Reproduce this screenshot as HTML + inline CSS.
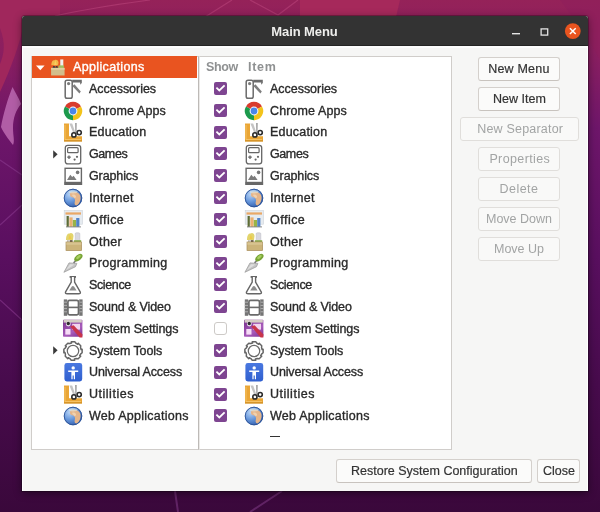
<!DOCTYPE html>
<html><head><meta charset="utf-8"><style>
*{margin:0;padding:0;box-sizing:border-box}
html,body{width:600px;height:512px;overflow:hidden}
body{position:relative;font-family:"Liberation Sans",sans-serif;
background:#5e1164;}
.wall{position:absolute;left:0;top:0;width:600px;height:512px}
.win{position:absolute;left:22px;top:16px;width:566px;height:475px;background:linear-gradient(#333 0,#333 29px,#f6f6f5 29px);border-radius:3px 3px 0 0;
box-shadow:inset 1px 0 0 #fff,inset -1px 0 0 #fff,0 2px 8px rgba(0,0,0,0.45),0 0 0 1px rgba(0,0,0,0.25)}
.title{position:absolute;left:22px;top:16px;width:566px;height:30px;background:#333333;border-radius:3px 3px 0 0;border-bottom:1px solid #242424}
.ttext{will-change:transform;position:absolute;left:0;top:16px;width:609px;height:30px;line-height:32px;text-align:center;color:#eeeeec;font-weight:bold;font-size:13px;letter-spacing:-0.1px}
.panel{position:absolute;background:#fff;border:1px solid #d0cdca}
.sel{position:absolute;left:32px;width:165px;background:#e95420}
.t{will-change:transform;position:absolute;height:21.82px;line-height:23.6px;font-size:12.5px;color:#2a2a2a;white-space:nowrap;-webkit-text-stroke-width:0.35px}
.t.w{color:#fff}
.ic{position:absolute;overflow:visible}
.cb{position:absolute;width:13px;height:13px;background:#7e4591;border-radius:2px}
.cb svg{position:absolute;left:0;top:0}
.cb.un{background:#fff;border:1px solid #cdcac7;border-radius:3px;margin-top:-0.5px;height:13.5px}
.hdr{will-change:transform;position:absolute;top:56px;height:22px;line-height:22px;font-size:12.5px;font-weight:bold;color:#8f9192}
.btn{position:absolute;height:24px;line-height:22px;text-align:center;font-size:12.5px;color:#333;-webkit-text-stroke-width:0.2px;background:#fbfbfa;
border:1px solid #d4d0cc;border-bottom-color:#c8c3be;border-radius:3px}
.bt{display:inline-block;will-change:transform}
.btn.dis{color:#a2a4a4;background:#f9f9f8;border-color:#e0dedb;-webkit-text-stroke-width:0}
</style></head><body>
<svg class="wall" width="600" height="512" viewBox="0 0 600 512">
<defs><linearGradient id="wbg" x1="0" y1="0" x2="0" y2="1">
<stop offset="0" stop-color="#952259"/><stop offset="0.1" stop-color="#8b1f60"/><stop offset="0.25" stop-color="#6e166a"/>
<stop offset="0.5" stop-color="#590f5f"/><stop offset="0.75" stop-color="#470b4c"/><stop offset="1" stop-color="#3a083b"/></linearGradient></defs>
<rect width="600" height="512" fill="url(#wbg)"/>
<path d="M0 0 H60 V17 L23 28 C19 45 12 66 0 92 V64 C4 54 6 44 0 28 Z" fill="#a0275c"/>
<path d="M23 50 C20 60 18 80 22 96 V50 Z" fill="#7c1a6c" opacity="0.5"/>
<path d="M300 0 H400 L396 17 H300 Z" fill="#a6295b"/>
<path d="M560 0 H600 V60 C590 40 575 20 560 0 Z" fill="#8e1e5c" opacity="0.5"/>
<path d="M205 17 L232 0 M250 0 L278 15 L298 0 M55 16 C90 8 120 4 150 0" stroke="#c04a80" stroke-width="1.2" fill="none" opacity="0.5"/>
<path d="M12.5 87 C15 92 19 98 21 104 C16 110 13 118 13 128 C13 136 15 141 13 145 C9 140 3 132 1 127 C3 115 8 98 12.5 87 Z" fill="#b865ad" opacity="0.9"/>
<path d="M0 160 L22 175 M0 225 L22 205 M0 300 L22 320" stroke="#8a3a90" stroke-width="1.2" fill="none" opacity="0.6"/>
<path d="M175 491 L178 512 M250 512 L282 491" stroke="#6a2a6e" stroke-width="2" fill="none" opacity="0.8"/>
</svg>
<div class="win"></div>
<div class="title"></div>
<div style="position:absolute;left:22px;top:46px;width:566px;height:2px;background:#fdfdfd"></div>
<div class="ttext">Main Menu</div>
<svg class="ic" style="left:512px;top:32.6px" width="8" height="2"><rect width="8" height="1.4" fill="#e4e4e4"/></svg>
<svg class="ic" style="left:540px;top:28px" width="9" height="8"><rect x="1.1" y="0.9" width="6.6" height="6.2" fill="none" stroke="#e4e4e4" stroke-width="1.3"/></svg>
<svg class="ic" style="left:564px;top:23px" width="18" height="18" viewBox="0 0 18 18"><circle cx="8.8" cy="8.1" r="7.9" fill="#e9541f"/><path d="M5.9 5.2 L11.7 11 M11.7 5.2 L5.9 11" stroke="#fff" stroke-width="1.5"/></svg>
<div class="panel" style="left:31px;top:56px;width:168px;height:394px;border-right-color:#bdbab7"></div>
<div class="panel" style="left:199px;top:56px;width:253px;height:394px;border-left-color:#ebe9e7"></div>
<div class="hdr" style="left:205.5px;letter-spacing:-0.35px">Show</div>
<div class="hdr" style="left:247.6px;letter-spacing:0.7px">Item</div>
<div style="position:absolute;left:270px;top:436px;width:10px;height:1px;background:#333"></div>
<div class="sel" style="top:56.00px;height:21.82px"></div>
<svg class="ic" style="left:36px;top:65px" width="9" height="6" viewBox="0 0 9 6"><path d="M0 0.5 H8.6 L4.3 5.2 Z" fill="#fff"/></svg>
<svg class="ic" style="left:50.00px;top:57.50px" width="18" height="18" viewBox="0 0 20 20"><path d="M1.5 7.5 C1.5 4 3 2 5 2.5 C7 1 9.5 3 9.5 5 L9 8 H1.5 Z" fill="#f2b84a"/><path d="M4.5 8 L6 2.5 L7.6 8 Z" fill="#f8d060"/><rect x="11.4" y="1.6" width="3.4" height="8" fill="#f0f0ee"/><rect x="9.4" y="8.2" width="6" height="3" fill="#9cc060"/><circle cx="4.4" cy="10.2" r="1.3" fill="#3a3a3a"/><circle cx="7.4" cy="10.2" r="1.3" fill="#3a3a3a"/><rect x="1.2" y="11" width="15" height="8.4" fill="#d2be8c"/><rect x="1.2" y="11" width="15" height="2" fill="#e0d0a0"/></svg>
<div class="t w" style="left:73.4px;top:56.00px;letter-spacing:0.35px">Applications</div>
<svg class="ic" style="left:63.40px;top:78.72px" width="20" height="20" viewBox="0 0 20 20"><rect x="2.2" y="1.3" width="7" height="18" rx="1.8" fill="#fff" stroke="#6b6b6b" stroke-width="1.5"/><circle cx="5.6" cy="4.6" r="1.6" fill="#7a7a7a"/><path d="M9.2 0.7 H18.8 V4 L17.2 5.8 V3.6 H9.2 Z" fill="#6b6b6b"/><path d="M9.4 7 L11.4 5.2 L17.8 12.4 L16.4 14.6 Z" fill="#7e7e7e"/></svg>
<div class="t" style="left:89px;top:77.82px;letter-spacing:-0.030px;">Accessories</div>
<svg class="ic" style="left:63.40px;top:100.54px" width="20" height="20" viewBox="0 0 20 20"><path d="M10 10 L17.97 5.4 A9.2 9.2 0 0 0 2.03 5.4 Z" fill="#d93c2e"/><path d="M10 10 L10 19.2 A9.2 9.2 0 0 0 17.97 5.4 Z" fill="#f3c31a"/><path d="M10 10 L2.03 5.4 A9.2 9.2 0 0 0 10 19.2 Z" fill="#1c9a4c"/><circle cx="10" cy="10" r="4.4" fill="#fff"/><circle cx="10" cy="10" r="3.4" fill="#4a86e8"/></svg>
<div class="t" style="left:89px;top:99.64px;letter-spacing:0.110px;">Chrome Apps</div>
<svg class="ic" style="left:63.40px;top:122.36px" width="20" height="20" viewBox="0 0 20 20"><path d="M1 1.6 H6 V14.3 H19 V19.4 H1 Z" fill="#eaa636"/><path d="M1 18.4 H19 V19.4 H1 Z" fill="#c98a22"/><path d="M2 3 V17.5 M2 17.5 H18" stroke="#f6c870" stroke-width="0.8"/><path d="M6.4 1.6 H9.2 L12.6 11.6 L11 12.4 Z" fill="#c4c4c4"/><path d="M12 0.9 H13.8 L13.6 10.6 L12.2 10.8 Z" fill="#a8a8a8"/><circle cx="10.9" cy="12.9" r="2.1" fill="none" stroke="#2a2a2a" stroke-width="1.6"/><circle cx="16.2" cy="10.6" r="2.1" fill="none" stroke="#2a2a2a" stroke-width="1.6"/></svg>
<div class="t" style="left:89px;top:121.46px;letter-spacing:0.200px;">Education</div>
<svg class="ic" style="left:53px;top:149.68px" width="5" height="9" viewBox="0 0 5 9"><path d="M0.2 0.3 V8.4 L4.6 4.35 Z" fill="#3a3a3a"/></svg>
<svg class="ic" style="left:63.40px;top:144.18px" width="20" height="20" viewBox="0 0 20 20"><rect x="2.3" y="1.3" width="15.4" height="18.6" rx="2.4" fill="#fff" stroke="#656565" stroke-width="1.3"/><rect x="4.6" y="3.7" width="10.5" height="5" rx="1" fill="none" stroke="#656565" stroke-width="1.2"/><path d="M4.2 13.2 H7.8 M6 11.4 V15" stroke="#656565" stroke-width="1.3"/><circle cx="14" cy="12.8" r="1.1" fill="#656565"/><circle cx="11.6" cy="15.6" r="1.1" fill="#656565"/></svg>
<div class="t" style="left:89px;top:143.28px;letter-spacing:-0.400px;">Games</div>
<svg class="ic" style="left:63.40px;top:166.00px" width="20" height="20" viewBox="0 0 20 20"><rect x="2.1" y="2.3" width="16.3" height="16" fill="#fff" stroke="#686868" stroke-width="1.4"/><rect x="1.4" y="15.8" width="17.7" height="3.1" fill="#686868"/><path d="M4 14 L7.3 8.8 L9.2 11 L10.6 9.8 L13.6 14 Z" fill="#7c7c7c"/><circle cx="14.6" cy="6.4" r="1.8" fill="#777"/></svg>
<div class="t" style="left:89px;top:165.10px;letter-spacing:-0.114px;">Graphics</div>
<svg class="ic" style="left:63.40px;top:187.82px" width="20" height="20" viewBox="0 0 20 20"><defs><radialGradient id="g7" cx="0.32" cy="0.3" r="0.78"><stop offset="0" stop-color="#b8d4f6"/><stop offset="0.5" stop-color="#6898dc"/><stop offset="1" stop-color="#2f5aa8"/></radialGradient></defs><circle cx="10" cy="10" r="9.2" fill="url(#g7)"/><path d="M7.6 4.6 C11 2.8 15.6 3.8 17.2 7.4 C18.2 11 17 15 14.2 17.2 C12.6 18 11.4 16.6 11.6 15 C11.8 13.2 12.6 11.6 11.2 10.2 C10.2 9.2 8.6 9.6 7.6 8.6 C6.6 7.6 6.6 5.6 7.6 4.6 Z" fill="#e6b68a"/><path d="M9 7 C10 6.2 12 6.6 12.8 7.8 C13.4 9 12.6 10.4 11.6 10 C10.8 9.4 9.6 8.6 9 7 Z" fill="#f0d2b0"/><ellipse cx="10" cy="3.8" rx="4.6" ry="1.6" fill="#e6efe8" opacity="0.55"/><circle cx="10" cy="10" r="8.8" fill="none" stroke="#2c5296" stroke-width="0.9"/></svg>
<div class="t" style="left:89px;top:186.92px;letter-spacing:0.300px;">Internet</div>
<svg class="ic" style="left:63.40px;top:209.64px" width="20" height="20" viewBox="0 0 20 20"><rect x="1.2" y="0.6" width="18.3" height="13.6" fill="#e6ebf0" stroke="#cdd3d9" stroke-width="0.6"/><rect x="2.5" y="2.4" width="15.5" height="2.2" fill="#eaa866"/><rect x="3.6" y="6" width="2.2" height="11" fill="#5e6c34"/><rect x="6.4" y="7.4" width="3.2" height="9.6" fill="#ecb070"/><rect x="9.8" y="10" width="3.2" height="7" fill="#98b448"/><rect x="13.2" y="8" width="3.2" height="9" fill="#5282c6"/><rect x="3" y="16.4" width="15" height="1" fill="#8a8a8a"/></svg>
<div class="t" style="left:89px;top:208.74px;letter-spacing:0.480px;">Office</div>
<svg class="ic" style="left:63.40px;top:231.46px" width="20" height="20" viewBox="0 0 20 20"><path d="M3 8 C3 4 5 2 6.5 2.5 C8 1 10.5 2.5 10.5 5 L10 9 H3 Z" fill="#e2d46c"/><path d="M5.5 8 L6.8 3.5 L8.5 8 Z" fill="#f0c84a"/><rect x="12.2" y="1.8" width="4.6" height="8" rx="1" fill="#d8d8e0" stroke="#b8b8c0" stroke-width="0.5"/><rect x="10.8" y="9.2" width="7.4" height="3" fill="#8aac4c"/><rect x="4.6" y="9.2" width="5" height="3" fill="#5a4a3a"/><circle cx="6" cy="10" r="1" fill="#f0f0f0"/><rect x="3" y="11" width="15.6" height="8.6" fill="#ccb47a" stroke="#a88f5c" stroke-width="0.7"/><rect x="3.4" y="11.4" width="14.8" height="2.4" fill="#d8c490"/></svg>
<div class="t" style="left:89px;top:230.56px;letter-spacing:0.350px;">Other</div>
<svg class="ic" style="left:63.40px;top:253.28px" width="20" height="20" viewBox="0 0 20 20"><path d="M0.9 19.3 L6 9.9 L13.9 10.4 L12.5 13.7 Z" fill="#c4c4c4" stroke="#9a9a9a" stroke-width="0.7" stroke-linejoin="round"/><path d="M3 17 L7 11.2 L11.5 11.6 Z" fill="#dedede"/><path d="M10.6 10 L12.8 7.4" stroke="#7a7a7a" stroke-width="1.6"/><ellipse cx="15.4" cy="4.6" rx="4.8" ry="2.8" transform="rotate(-40 15.4 4.6)" fill="#78a436"/><ellipse cx="15.8" cy="4.2" rx="2.8" ry="1.2" transform="rotate(-40 15.4 4.6)" fill="#a8d060"/></svg>
<div class="t" style="left:89px;top:252.38px;letter-spacing:0.330px;">Programming</div>
<svg class="ic" style="left:63.40px;top:275.10px" width="20" height="20" viewBox="0 0 20 20"><path d="M6.6 1.9 H13" stroke="#666" stroke-width="1.8"/><path d="M8.2 2 V7.2 L2.6 16.8 Q1.8 18.8 4.2 18.8 H15.6 Q18 18.8 17.2 16.8 L11.6 7.2 V2" fill="#fff" stroke="#666" stroke-width="1.4" stroke-linejoin="round"/><path d="M6.2 15.6 L8.8 11.4 Q9.9 10.6 11 11.4 L13.6 15.6 Z" fill="#8c8c8c"/></svg>
<div class="t" style="left:89px;top:274.20px;letter-spacing:-0.367px;">Science</div>
<svg class="ic" style="left:63.40px;top:296.92px" width="20" height="20" viewBox="0 0 20 20"><rect x="0.8" y="2.4" width="3.4" height="16.4" fill="#757575"/><rect x="16.2" y="2.4" width="3.4" height="16.4" fill="#757575"/><path d="M0.8 5.2 H4.2 M0.8 8.4 H4.2 M0.8 11.6 H4.2 M0.8 14.8 H4.2 M16.2 5.2 H19.6 M16.2 8.4 H19.6 M16.2 11.6 H19.6 M16.2 14.8 H19.6" stroke="#b8b8b8" stroke-width="0.9"/><rect x="4.9" y="3.3" width="10.6" height="14.6" rx="1.6" fill="#fff" stroke="#6a6a6a" stroke-width="1.7"/><path d="M4.9 10.4 H15.5" stroke="#6a6a6a" stroke-width="1.6"/></svg>
<div class="t" style="left:89px;top:296.02px;letter-spacing:-0.108px;">Sound &amp; Video</div>
<svg class="ic" style="left:63.40px;top:318.74px" width="20" height="20" viewBox="0 0 20 20"><defs><linearGradient id="g13" x1="0" y1="0" x2="0.7" y2="1"><stop offset="0" stop-color="#76308a"/><stop offset="0.7" stop-color="#a85cbc"/><stop offset="1" stop-color="#8a3e9c"/></linearGradient></defs><rect x="0" y="0.8" width="19.4" height="16.9" rx="0.8" fill="url(#g13)"/><rect x="0.6" y="0.8" width="18.2" height="2.8" fill="#d4cec4"/><rect x="9.2" y="4.8" width="7.8" height="5.8" fill="#f2d4ee"/><path d="M7.2 7.6 L10.6 6.2 L19.4 15.4 V18.4 L16.6 18.4 Z" fill="#c8344a"/><circle cx="5.3" cy="5" r="2.4" fill="#efe6ef"/><circle cx="5.3" cy="4.5" r="1.7" fill="#2e2e2e"/><rect x="2.3" y="10" width="5.2" height="5.6" fill="#f6dcf6"/></svg>
<div class="t" style="left:89px;top:317.84px;letter-spacing:-0.057px;">System Settings</div>
<svg class="ic" style="left:53px;top:346.06px" width="5" height="9" viewBox="0 0 5 9"><path d="M0.2 0.3 V8.4 L4.6 4.35 Z" fill="#3a3a3a"/></svg>
<svg class="ic" style="left:63.40px;top:340.56px" width="20" height="20" viewBox="0 0 20 20"><path d="M8.23 0.87 L11.77 0.87 L13.14 2.42 L14.70 3.28 L15.20 2.29 L17.71 4.80 L17.58 6.86 L18.08 8.58 L19.13 8.23 L19.13 11.77 L17.58 13.14 L16.72 14.70 L17.71 15.20 L15.20 17.71 L13.14 17.58 L11.42 18.08 L11.77 19.13 L8.23 19.13 L6.86 17.58 L5.30 16.72 L4.80 17.71 L2.29 15.20 L2.42 13.14 L1.92 11.42 L0.87 11.77 L0.87 8.23 L2.42 6.86 L3.28 5.30 L2.29 4.80 L4.80 2.29 L6.86 2.42 L8.58 1.92 Z" fill="#fff" stroke="#656565" stroke-width="1.5" stroke-linejoin="round"/><circle cx="10" cy="10" r="5.7" fill="none" stroke="#6a6a6a" stroke-width="1.25"/></svg>
<div class="t" style="left:89px;top:339.66px;letter-spacing:-0.073px;">System Tools</div>
<svg class="ic" style="left:63.40px;top:362.38px" width="20" height="20" viewBox="0 0 20 20"><defs><linearGradient id="g15" x1="0" y1="0" x2="0" y2="1"><stop offset="0" stop-color="#4a78e0"/><stop offset="1" stop-color="#2f5fcf"/></linearGradient></defs><rect x="1.4" y="1" width="17.8" height="18.4" rx="2.4" fill="url(#g15)"/><circle cx="10.2" cy="5.9" r="1.7" fill="#fff"/><path d="M5.2 8.4 H15.2 L15.2 10 H12 V17.2 H10.8 V13.4 H9.6 V17.2 H8.4 V10 H5.2 Z" fill="#fff"/></svg>
<div class="t" style="left:89px;top:361.48px;letter-spacing:-0.133px;">Universal Access</div>
<svg class="ic" style="left:63.40px;top:384.20px" width="20" height="20" viewBox="0 0 20 20"><path d="M1 1.6 H6 V14.3 H19 V19.4 H1 Z" fill="#eaa636"/><path d="M1 18.4 H19 V19.4 H1 Z" fill="#c98a22"/><path d="M2 3 V17.5 M2 17.5 H18" stroke="#f6c870" stroke-width="0.8"/><path d="M6.4 1.6 H9.2 L12.6 11.6 L11 12.4 Z" fill="#c4c4c4"/><path d="M12 0.9 H13.8 L13.6 10.6 L12.2 10.8 Z" fill="#a8a8a8"/><circle cx="10.9" cy="12.9" r="2.1" fill="none" stroke="#2a2a2a" stroke-width="1.6"/><circle cx="16.2" cy="10.6" r="2.1" fill="none" stroke="#2a2a2a" stroke-width="1.6"/></svg>
<div class="t" style="left:89px;top:383.30px;letter-spacing:0.512px;">Utilities</div>
<svg class="ic" style="left:63.40px;top:406.02px" width="20" height="20" viewBox="0 0 20 20"><defs><radialGradient id="g17" cx="0.32" cy="0.3" r="0.78"><stop offset="0" stop-color="#b8d4f6"/><stop offset="0.5" stop-color="#6898dc"/><stop offset="1" stop-color="#2f5aa8"/></radialGradient></defs><circle cx="10" cy="10" r="9.2" fill="url(#g17)"/><path d="M7.6 4.6 C11 2.8 15.6 3.8 17.2 7.4 C18.2 11 17 15 14.2 17.2 C12.6 18 11.4 16.6 11.6 15 C11.8 13.2 12.6 11.6 11.2 10.2 C10.2 9.2 8.6 9.6 7.6 8.6 C6.6 7.6 6.6 5.6 7.6 4.6 Z" fill="#e6b68a"/><path d="M9 7 C10 6.2 12 6.6 12.8 7.8 C13.4 9 12.6 10.4 11.6 10 C10.8 9.4 9.6 8.6 9 7 Z" fill="#f0d2b0"/><ellipse cx="10" cy="3.8" rx="4.6" ry="1.6" fill="#e6efe8" opacity="0.55"/><circle cx="10" cy="10" r="8.8" fill="none" stroke="#2c5296" stroke-width="0.9"/></svg>
<div class="t" style="left:89px;top:405.12px;letter-spacing:0.253px;">Web Applications</div>
<div class="cb" style="left:214px;top:82.02px"><svg width="13" height="13" viewBox="0 0 13 13"><path d="M2.4 5.7 L5.3 8.4 L10.6 3.3" fill="none" stroke="#fff" stroke-width="1.8"/></svg></div>
<svg class="ic" style="left:244.40px;top:78.72px" width="20" height="20" viewBox="0 0 20 20"><rect x="2.2" y="1.3" width="7" height="18" rx="1.8" fill="#fff" stroke="#6b6b6b" stroke-width="1.5"/><circle cx="5.6" cy="4.6" r="1.6" fill="#7a7a7a"/><path d="M9.2 0.7 H18.8 V4 L17.2 5.8 V3.6 H9.2 Z" fill="#6b6b6b"/><path d="M9.4 7 L11.4 5.2 L17.8 12.4 L16.4 14.6 Z" fill="#7e7e7e"/></svg>
<div class="t" style="left:270px;top:77.82px;letter-spacing:-0.030px;">Accessories</div>
<div class="cb" style="left:214px;top:103.84px"><svg width="13" height="13" viewBox="0 0 13 13"><path d="M2.4 5.7 L5.3 8.4 L10.6 3.3" fill="none" stroke="#fff" stroke-width="1.8"/></svg></div>
<svg class="ic" style="left:244.40px;top:100.54px" width="20" height="20" viewBox="0 0 20 20"><path d="M10 10 L17.97 5.4 A9.2 9.2 0 0 0 2.03 5.4 Z" fill="#d93c2e"/><path d="M10 10 L10 19.2 A9.2 9.2 0 0 0 17.97 5.4 Z" fill="#f3c31a"/><path d="M10 10 L2.03 5.4 A9.2 9.2 0 0 0 10 19.2 Z" fill="#1c9a4c"/><circle cx="10" cy="10" r="4.4" fill="#fff"/><circle cx="10" cy="10" r="3.4" fill="#4a86e8"/></svg>
<div class="t" style="left:270px;top:99.64px;letter-spacing:0.110px;">Chrome Apps</div>
<div class="cb" style="left:214px;top:125.66px"><svg width="13" height="13" viewBox="0 0 13 13"><path d="M2.4 5.7 L5.3 8.4 L10.6 3.3" fill="none" stroke="#fff" stroke-width="1.8"/></svg></div>
<svg class="ic" style="left:244.40px;top:122.36px" width="20" height="20" viewBox="0 0 20 20"><path d="M1 1.6 H6 V14.3 H19 V19.4 H1 Z" fill="#eaa636"/><path d="M1 18.4 H19 V19.4 H1 Z" fill="#c98a22"/><path d="M2 3 V17.5 M2 17.5 H18" stroke="#f6c870" stroke-width="0.8"/><path d="M6.4 1.6 H9.2 L12.6 11.6 L11 12.4 Z" fill="#c4c4c4"/><path d="M12 0.9 H13.8 L13.6 10.6 L12.2 10.8 Z" fill="#a8a8a8"/><circle cx="10.9" cy="12.9" r="2.1" fill="none" stroke="#2a2a2a" stroke-width="1.6"/><circle cx="16.2" cy="10.6" r="2.1" fill="none" stroke="#2a2a2a" stroke-width="1.6"/></svg>
<div class="t" style="left:270px;top:121.46px;letter-spacing:0.200px;">Education</div>
<div class="cb" style="left:214px;top:147.48px"><svg width="13" height="13" viewBox="0 0 13 13"><path d="M2.4 5.7 L5.3 8.4 L10.6 3.3" fill="none" stroke="#fff" stroke-width="1.8"/></svg></div>
<svg class="ic" style="left:244.40px;top:144.18px" width="20" height="20" viewBox="0 0 20 20"><rect x="2.3" y="1.3" width="15.4" height="18.6" rx="2.4" fill="#fff" stroke="#656565" stroke-width="1.3"/><rect x="4.6" y="3.7" width="10.5" height="5" rx="1" fill="none" stroke="#656565" stroke-width="1.2"/><path d="M4.2 13.2 H7.8 M6 11.4 V15" stroke="#656565" stroke-width="1.3"/><circle cx="14" cy="12.8" r="1.1" fill="#656565"/><circle cx="11.6" cy="15.6" r="1.1" fill="#656565"/></svg>
<div class="t" style="left:270px;top:143.28px;letter-spacing:-0.400px;">Games</div>
<div class="cb" style="left:214px;top:169.30px"><svg width="13" height="13" viewBox="0 0 13 13"><path d="M2.4 5.7 L5.3 8.4 L10.6 3.3" fill="none" stroke="#fff" stroke-width="1.8"/></svg></div>
<svg class="ic" style="left:244.40px;top:166.00px" width="20" height="20" viewBox="0 0 20 20"><rect x="2.1" y="2.3" width="16.3" height="16" fill="#fff" stroke="#686868" stroke-width="1.4"/><rect x="1.4" y="15.8" width="17.7" height="3.1" fill="#686868"/><path d="M4 14 L7.3 8.8 L9.2 11 L10.6 9.8 L13.6 14 Z" fill="#7c7c7c"/><circle cx="14.6" cy="6.4" r="1.8" fill="#777"/></svg>
<div class="t" style="left:270px;top:165.10px;letter-spacing:-0.114px;">Graphics</div>
<div class="cb" style="left:214px;top:191.12px"><svg width="13" height="13" viewBox="0 0 13 13"><path d="M2.4 5.7 L5.3 8.4 L10.6 3.3" fill="none" stroke="#fff" stroke-width="1.8"/></svg></div>
<svg class="ic" style="left:244.40px;top:187.82px" width="20" height="20" viewBox="0 0 20 20"><defs><radialGradient id="g23" cx="0.32" cy="0.3" r="0.78"><stop offset="0" stop-color="#b8d4f6"/><stop offset="0.5" stop-color="#6898dc"/><stop offset="1" stop-color="#2f5aa8"/></radialGradient></defs><circle cx="10" cy="10" r="9.2" fill="url(#g23)"/><path d="M7.6 4.6 C11 2.8 15.6 3.8 17.2 7.4 C18.2 11 17 15 14.2 17.2 C12.6 18 11.4 16.6 11.6 15 C11.8 13.2 12.6 11.6 11.2 10.2 C10.2 9.2 8.6 9.6 7.6 8.6 C6.6 7.6 6.6 5.6 7.6 4.6 Z" fill="#e6b68a"/><path d="M9 7 C10 6.2 12 6.6 12.8 7.8 C13.4 9 12.6 10.4 11.6 10 C10.8 9.4 9.6 8.6 9 7 Z" fill="#f0d2b0"/><ellipse cx="10" cy="3.8" rx="4.6" ry="1.6" fill="#e6efe8" opacity="0.55"/><circle cx="10" cy="10" r="8.8" fill="none" stroke="#2c5296" stroke-width="0.9"/></svg>
<div class="t" style="left:270px;top:186.92px;letter-spacing:0.300px;">Internet</div>
<div class="cb" style="left:214px;top:212.94px"><svg width="13" height="13" viewBox="0 0 13 13"><path d="M2.4 5.7 L5.3 8.4 L10.6 3.3" fill="none" stroke="#fff" stroke-width="1.8"/></svg></div>
<svg class="ic" style="left:244.40px;top:209.64px" width="20" height="20" viewBox="0 0 20 20"><rect x="1.2" y="0.6" width="18.3" height="13.6" fill="#e6ebf0" stroke="#cdd3d9" stroke-width="0.6"/><rect x="2.5" y="2.4" width="15.5" height="2.2" fill="#eaa866"/><rect x="3.6" y="6" width="2.2" height="11" fill="#5e6c34"/><rect x="6.4" y="7.4" width="3.2" height="9.6" fill="#ecb070"/><rect x="9.8" y="10" width="3.2" height="7" fill="#98b448"/><rect x="13.2" y="8" width="3.2" height="9" fill="#5282c6"/><rect x="3" y="16.4" width="15" height="1" fill="#8a8a8a"/></svg>
<div class="t" style="left:270px;top:208.74px;letter-spacing:0.480px;">Office</div>
<div class="cb" style="left:214px;top:234.76px"><svg width="13" height="13" viewBox="0 0 13 13"><path d="M2.4 5.7 L5.3 8.4 L10.6 3.3" fill="none" stroke="#fff" stroke-width="1.8"/></svg></div>
<svg class="ic" style="left:244.40px;top:231.46px" width="20" height="20" viewBox="0 0 20 20"><path d="M3 8 C3 4 5 2 6.5 2.5 C8 1 10.5 2.5 10.5 5 L10 9 H3 Z" fill="#e2d46c"/><path d="M5.5 8 L6.8 3.5 L8.5 8 Z" fill="#f0c84a"/><rect x="12.2" y="1.8" width="4.6" height="8" rx="1" fill="#d8d8e0" stroke="#b8b8c0" stroke-width="0.5"/><rect x="10.8" y="9.2" width="7.4" height="3" fill="#8aac4c"/><rect x="4.6" y="9.2" width="5" height="3" fill="#5a4a3a"/><circle cx="6" cy="10" r="1" fill="#f0f0f0"/><rect x="3" y="11" width="15.6" height="8.6" fill="#ccb47a" stroke="#a88f5c" stroke-width="0.7"/><rect x="3.4" y="11.4" width="14.8" height="2.4" fill="#d8c490"/></svg>
<div class="t" style="left:270px;top:230.56px;letter-spacing:0.350px;">Other</div>
<div class="cb" style="left:214px;top:256.58px"><svg width="13" height="13" viewBox="0 0 13 13"><path d="M2.4 5.7 L5.3 8.4 L10.6 3.3" fill="none" stroke="#fff" stroke-width="1.8"/></svg></div>
<svg class="ic" style="left:244.40px;top:253.28px" width="20" height="20" viewBox="0 0 20 20"><path d="M0.9 19.3 L6 9.9 L13.9 10.4 L12.5 13.7 Z" fill="#c4c4c4" stroke="#9a9a9a" stroke-width="0.7" stroke-linejoin="round"/><path d="M3 17 L7 11.2 L11.5 11.6 Z" fill="#dedede"/><path d="M10.6 10 L12.8 7.4" stroke="#7a7a7a" stroke-width="1.6"/><ellipse cx="15.4" cy="4.6" rx="4.8" ry="2.8" transform="rotate(-40 15.4 4.6)" fill="#78a436"/><ellipse cx="15.8" cy="4.2" rx="2.8" ry="1.2" transform="rotate(-40 15.4 4.6)" fill="#a8d060"/></svg>
<div class="t" style="left:270px;top:252.38px;letter-spacing:0.330px;">Programming</div>
<div class="cb" style="left:214px;top:278.40px"><svg width="13" height="13" viewBox="0 0 13 13"><path d="M2.4 5.7 L5.3 8.4 L10.6 3.3" fill="none" stroke="#fff" stroke-width="1.8"/></svg></div>
<svg class="ic" style="left:244.40px;top:275.10px" width="20" height="20" viewBox="0 0 20 20"><path d="M6.6 1.9 H13" stroke="#666" stroke-width="1.8"/><path d="M8.2 2 V7.2 L2.6 16.8 Q1.8 18.8 4.2 18.8 H15.6 Q18 18.8 17.2 16.8 L11.6 7.2 V2" fill="#fff" stroke="#666" stroke-width="1.4" stroke-linejoin="round"/><path d="M6.2 15.6 L8.8 11.4 Q9.9 10.6 11 11.4 L13.6 15.6 Z" fill="#8c8c8c"/></svg>
<div class="t" style="left:270px;top:274.20px;letter-spacing:-0.367px;">Science</div>
<div class="cb" style="left:214px;top:300.22px"><svg width="13" height="13" viewBox="0 0 13 13"><path d="M2.4 5.7 L5.3 8.4 L10.6 3.3" fill="none" stroke="#fff" stroke-width="1.8"/></svg></div>
<svg class="ic" style="left:244.40px;top:296.92px" width="20" height="20" viewBox="0 0 20 20"><rect x="0.8" y="2.4" width="3.4" height="16.4" fill="#757575"/><rect x="16.2" y="2.4" width="3.4" height="16.4" fill="#757575"/><path d="M0.8 5.2 H4.2 M0.8 8.4 H4.2 M0.8 11.6 H4.2 M0.8 14.8 H4.2 M16.2 5.2 H19.6 M16.2 8.4 H19.6 M16.2 11.6 H19.6 M16.2 14.8 H19.6" stroke="#b8b8b8" stroke-width="0.9"/><rect x="4.9" y="3.3" width="10.6" height="14.6" rx="1.6" fill="#fff" stroke="#6a6a6a" stroke-width="1.7"/><path d="M4.9 10.4 H15.5" stroke="#6a6a6a" stroke-width="1.6"/></svg>
<div class="t" style="left:270px;top:296.02px;letter-spacing:-0.108px;">Sound &amp; Video</div>
<div class="cb un" style="left:214px;top:322.04px"></div>
<svg class="ic" style="left:244.40px;top:318.74px" width="20" height="20" viewBox="0 0 20 20"><defs><linearGradient id="g29" x1="0" y1="0" x2="0.7" y2="1"><stop offset="0" stop-color="#76308a"/><stop offset="0.7" stop-color="#a85cbc"/><stop offset="1" stop-color="#8a3e9c"/></linearGradient></defs><rect x="0" y="0.8" width="19.4" height="16.9" rx="0.8" fill="url(#g29)"/><rect x="0.6" y="0.8" width="18.2" height="2.8" fill="#d4cec4"/><rect x="9.2" y="4.8" width="7.8" height="5.8" fill="#f2d4ee"/><path d="M7.2 7.6 L10.6 6.2 L19.4 15.4 V18.4 L16.6 18.4 Z" fill="#c8344a"/><circle cx="5.3" cy="5" r="2.4" fill="#efe6ef"/><circle cx="5.3" cy="4.5" r="1.7" fill="#2e2e2e"/><rect x="2.3" y="10" width="5.2" height="5.6" fill="#f6dcf6"/></svg>
<div class="t" style="left:270px;top:317.84px;letter-spacing:-0.057px;">System Settings</div>
<div class="cb" style="left:214px;top:343.86px"><svg width="13" height="13" viewBox="0 0 13 13"><path d="M2.4 5.7 L5.3 8.4 L10.6 3.3" fill="none" stroke="#fff" stroke-width="1.8"/></svg></div>
<svg class="ic" style="left:244.40px;top:340.56px" width="20" height="20" viewBox="0 0 20 20"><path d="M8.23 0.87 L11.77 0.87 L13.14 2.42 L14.70 3.28 L15.20 2.29 L17.71 4.80 L17.58 6.86 L18.08 8.58 L19.13 8.23 L19.13 11.77 L17.58 13.14 L16.72 14.70 L17.71 15.20 L15.20 17.71 L13.14 17.58 L11.42 18.08 L11.77 19.13 L8.23 19.13 L6.86 17.58 L5.30 16.72 L4.80 17.71 L2.29 15.20 L2.42 13.14 L1.92 11.42 L0.87 11.77 L0.87 8.23 L2.42 6.86 L3.28 5.30 L2.29 4.80 L4.80 2.29 L6.86 2.42 L8.58 1.92 Z" fill="#fff" stroke="#656565" stroke-width="1.5" stroke-linejoin="round"/><circle cx="10" cy="10" r="5.7" fill="none" stroke="#6a6a6a" stroke-width="1.25"/></svg>
<div class="t" style="left:270px;top:339.66px;letter-spacing:-0.073px;">System Tools</div>
<div class="cb" style="left:214px;top:365.68px"><svg width="13" height="13" viewBox="0 0 13 13"><path d="M2.4 5.7 L5.3 8.4 L10.6 3.3" fill="none" stroke="#fff" stroke-width="1.8"/></svg></div>
<svg class="ic" style="left:244.40px;top:362.38px" width="20" height="20" viewBox="0 0 20 20"><defs><linearGradient id="g31" x1="0" y1="0" x2="0" y2="1"><stop offset="0" stop-color="#4a78e0"/><stop offset="1" stop-color="#2f5fcf"/></linearGradient></defs><rect x="1.4" y="1" width="17.8" height="18.4" rx="2.4" fill="url(#g31)"/><circle cx="10.2" cy="5.9" r="1.7" fill="#fff"/><path d="M5.2 8.4 H15.2 L15.2 10 H12 V17.2 H10.8 V13.4 H9.6 V17.2 H8.4 V10 H5.2 Z" fill="#fff"/></svg>
<div class="t" style="left:270px;top:361.48px;letter-spacing:-0.133px;">Universal Access</div>
<div class="cb" style="left:214px;top:387.50px"><svg width="13" height="13" viewBox="0 0 13 13"><path d="M2.4 5.7 L5.3 8.4 L10.6 3.3" fill="none" stroke="#fff" stroke-width="1.8"/></svg></div>
<svg class="ic" style="left:244.40px;top:384.20px" width="20" height="20" viewBox="0 0 20 20"><path d="M1 1.6 H6 V14.3 H19 V19.4 H1 Z" fill="#eaa636"/><path d="M1 18.4 H19 V19.4 H1 Z" fill="#c98a22"/><path d="M2 3 V17.5 M2 17.5 H18" stroke="#f6c870" stroke-width="0.8"/><path d="M6.4 1.6 H9.2 L12.6 11.6 L11 12.4 Z" fill="#c4c4c4"/><path d="M12 0.9 H13.8 L13.6 10.6 L12.2 10.8 Z" fill="#a8a8a8"/><circle cx="10.9" cy="12.9" r="2.1" fill="none" stroke="#2a2a2a" stroke-width="1.6"/><circle cx="16.2" cy="10.6" r="2.1" fill="none" stroke="#2a2a2a" stroke-width="1.6"/></svg>
<div class="t" style="left:270px;top:383.30px;letter-spacing:0.512px;">Utilities</div>
<div class="cb" style="left:214px;top:409.32px"><svg width="13" height="13" viewBox="0 0 13 13"><path d="M2.4 5.7 L5.3 8.4 L10.6 3.3" fill="none" stroke="#fff" stroke-width="1.8"/></svg></div>
<svg class="ic" style="left:244.40px;top:406.02px" width="20" height="20" viewBox="0 0 20 20"><defs><radialGradient id="g33" cx="0.32" cy="0.3" r="0.78"><stop offset="0" stop-color="#b8d4f6"/><stop offset="0.5" stop-color="#6898dc"/><stop offset="1" stop-color="#2f5aa8"/></radialGradient></defs><circle cx="10" cy="10" r="9.2" fill="url(#g33)"/><path d="M7.6 4.6 C11 2.8 15.6 3.8 17.2 7.4 C18.2 11 17 15 14.2 17.2 C12.6 18 11.4 16.6 11.6 15 C11.8 13.2 12.6 11.6 11.2 10.2 C10.2 9.2 8.6 9.6 7.6 8.6 C6.6 7.6 6.6 5.6 7.6 4.6 Z" fill="#e6b68a"/><path d="M9 7 C10 6.2 12 6.6 12.8 7.8 C13.4 9 12.6 10.4 11.6 10 C10.8 9.4 9.6 8.6 9 7 Z" fill="#f0d2b0"/><ellipse cx="10" cy="3.8" rx="4.6" ry="1.6" fill="#e6efe8" opacity="0.55"/><circle cx="10" cy="10" r="8.8" fill="none" stroke="#2c5296" stroke-width="0.9"/></svg>
<div class="t" style="left:270px;top:405.12px;letter-spacing:0.253px;">Web Applications</div>
<div class="btn" style="left:478px;top:57px;width:82px;letter-spacing:0.20px;text-indent:0.20px"><span class="bt">New Menu</span></div>
<div class="btn" style="left:478px;top:87px;width:82px;letter-spacing:0.00px;text-indent:0.00px"><span class="bt">New Item</span></div>
<div class="btn dis" style="left:460px;top:117px;width:119px;letter-spacing:0.20px;text-indent:0.20px"><span class="bt">New Separator</span></div>
<div class="btn dis" style="left:478px;top:147px;width:82px;letter-spacing:0.39px;text-indent:0.39px"><span class="bt">Properties</span></div>
<div class="btn dis" style="left:478px;top:177px;width:82px;letter-spacing:0.48px;text-indent:0.48px"><span class="bt">Delete</span></div>
<div class="btn dis" style="left:478px;top:207px;width:82px;letter-spacing:0.00px;text-indent:0.00px"><span class="bt">Move Down</span></div>
<div class="btn dis" style="left:478px;top:237px;width:82px;letter-spacing:0.00px;text-indent:0.00px"><span class="bt">Move Up</span></div>
<div class="btn" style="left:336px;top:459px;width:196px;letter-spacing:0.00px;text-indent:0.00px"><span class="bt">Restore System Configuration</span></div>
<div class="btn" style="left:537px;top:459px;width:43px;letter-spacing:0.00px;text-indent:0.00px"><span class="bt">Close</span></div>
</body></html>
